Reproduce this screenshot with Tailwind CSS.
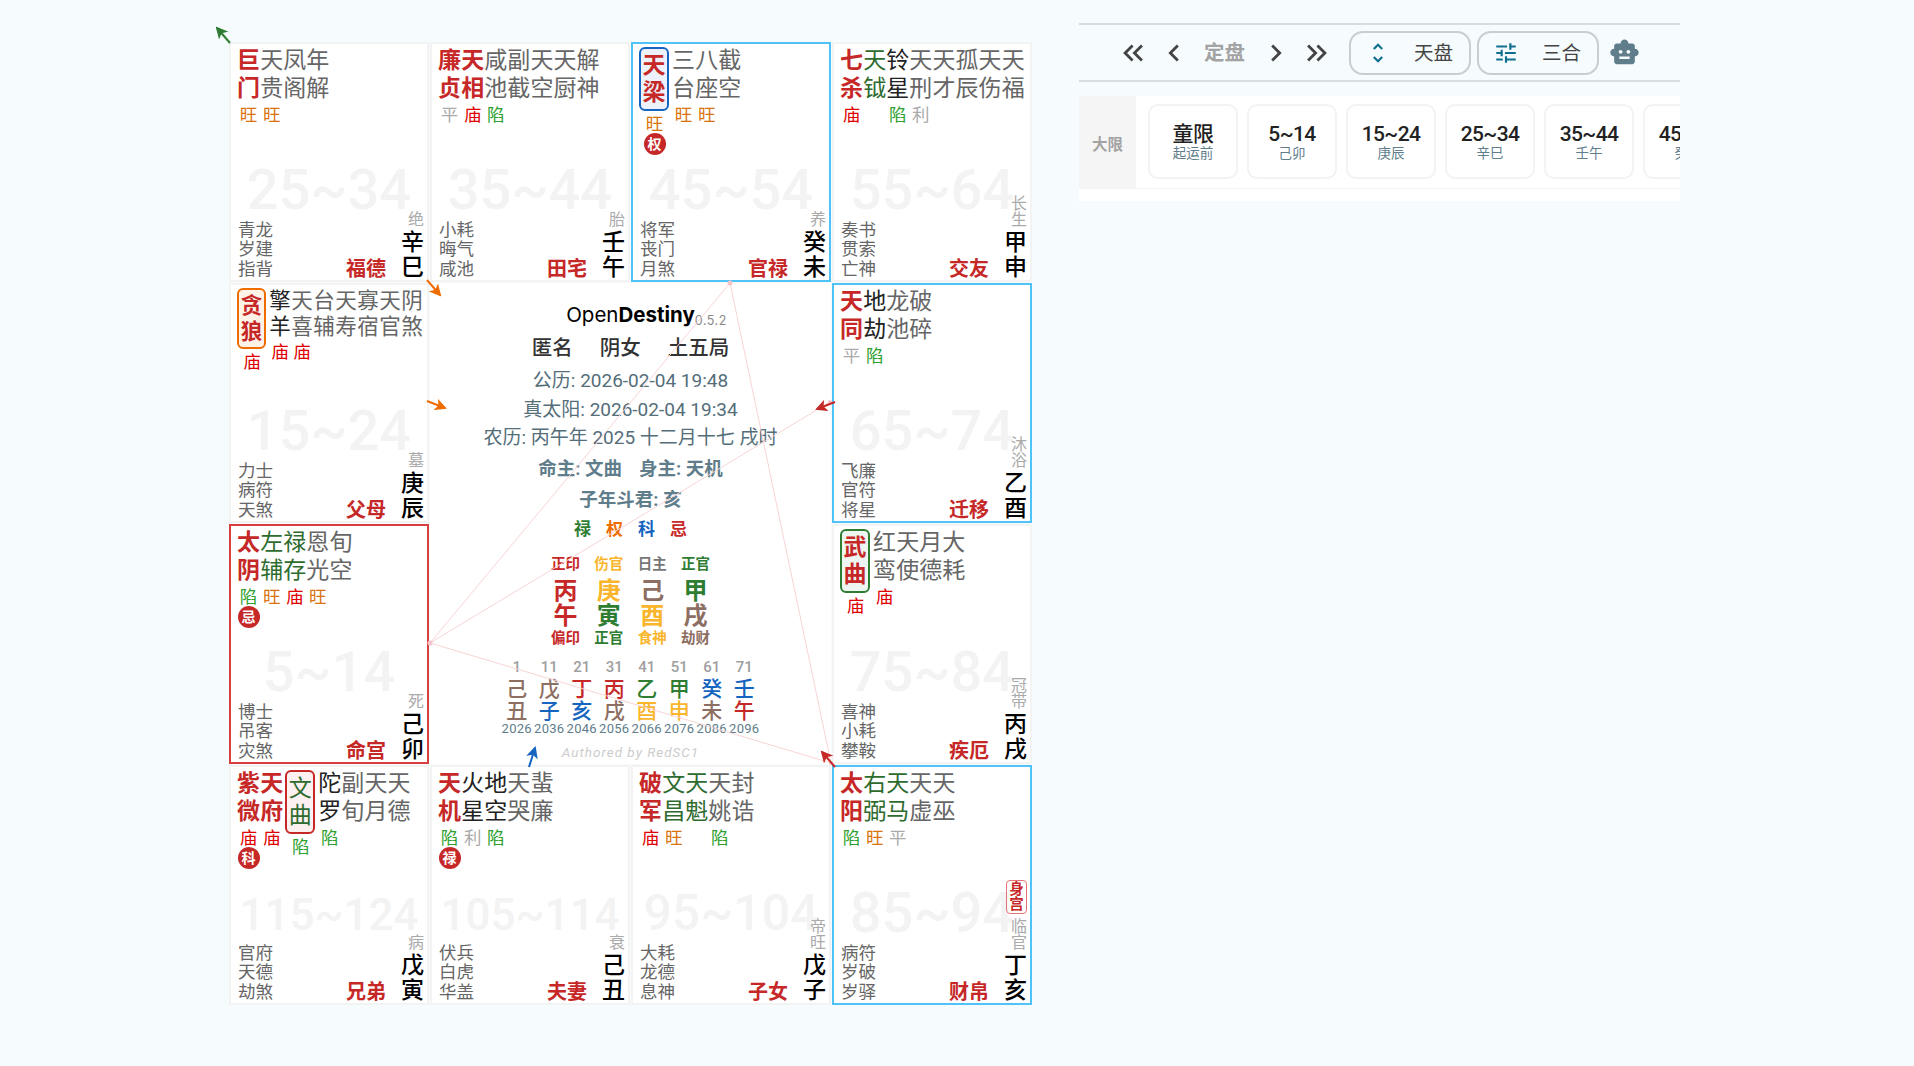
<!DOCTYPE html>
<html lang="zh-CN">
<head>
    <meta charset="UTF-8">
    <title>OpenDestiny</title>
    <script src="https://cdn.jsdelivr.net/npm/@tailwindcss/browser@4"></script>
</head>
<body class="h-screen overflow-hidden bg-[#f6fbfe] font-[Roboto,'Noto_Sans_CJK_SC',sans-serif]">
    <div class="flex items-start">
        <!-- 命盘 -->
        <div id="board" class="relative mt-[42px] ml-[229px] grid grid-cols-[repeat(4,200px)] grid-rows-[repeat(4,240px)] gap-px">
            <!-- 中宫 -->
            <div class="col-start-2 col-span-2 row-start-2 row-span-2 flex flex-col items-center bg-white pt-[17px]">
                <div class="h-[30px] flex items-baseline font-[Inter,sans-serif] text-[20.5px] leading-[30px] text-black">
                    <span>Open</span><span class="font-bold">Destiny</span><span class="w-0 translate-y-[3px] text-[12.5px] tracking-[0.5px] text-[#888]">0.5.2</span>
                </div>
                <div class="mt-px flex gap-[27px] text-[20.5px] leading-[34px] font-medium text-[#333]">
                    <span>匿名</span><span>阴女</span><span>土五局</span>
                </div>
                <div class="mt-[2px] text-[19px] leading-[28.5px] text-[#546e7a] text-center">
                    <p>公历: 2026-02-04 19:48</p>
                    <p>真太阳: 2026-02-04 19:34</p>
                    <p>农历: 丙午年 2025 十二月十七 戌时</p>
                </div>
                <p class="flex gap-[17px] text-[18.5px] leading-[32px] font-bold text-[#607d8b]"><span>命主: 文曲</span><span>身主: 天机</span></p>
                <p class="text-[18.5px] leading-[30px] font-bold text-[#607d8b]">子年斗君: 亥</p>
                <div class="flex gap-[15px] text-[17px] leading-[28px] font-bold">
                    <span class="text-[#2e7d32]">禄</span><span class="text-[#ef6c00]">权</span><span class="text-[#1565c0]">科</span><span class="text-[#c62828]">忌</span>
                </div>
                <!-- 八字 -->
                <div id="bazi" class="mt-[8px] grid grid-cols-[repeat(4,43.3px)] text-center"></div>
                <!-- 小运 -->
                <div id="xiaoyun" class="mt-[9px] grid grid-cols-[repeat(8,32.5px)] text-center"></div>
                <p class="mt-[6px] text-[13.5px] leading-[20px] italic tracking-[1px] text-[#ccc]">Authored by RedSC1</p>
            </div>

            <!-- 飞化连线 -->
            <svg class="absolute left-0 top-0 z-10 overflow-visible pointer-events-none" width="803" height="963" fill="none">
                <defs>
                    <marker id="ag" markerWidth="6" markerHeight="6" refX="5" refY="3" orient="auto"><path d="M0 0L6 3L0 6L1.5 3Z" fill="#2e7d32"/></marker>
                    <marker id="ao" markerWidth="6" markerHeight="6" refX="5" refY="3" orient="auto"><path d="M0 0L6 3L0 6L1.5 3Z" fill="#ef6c00"/></marker>
                    <marker id="ar" markerWidth="6" markerHeight="6" refX="5" refY="3" orient="auto"><path d="M0 0L6 3L0 6L1.5 3Z" fill="#c62828"/></marker>
                    <marker id="ab" markerWidth="6" markerHeight="6" refX="5" refY="3" orient="auto"><path d="M0 0L6 3L0 6L1.5 3Z" fill="#1565c0"/></marker>
                </defs>
                <g stroke="#f8d5d5" stroke-width="1">
                    <path d="M201 601L501 241L602 721Z"/>
                    <path d="M201 601L601 360"/>
                </g>
                <g fill="#f5c4c8">
                    <circle cx="201" cy="601" r="2.5"/><circle cx="501" cy="241" r="2.5"/><circle cx="601" cy="360" r="2"/><circle cx="602" cy="721" r="2"/>
                </g>
                <g stroke-width="2">
                    <path d="M1 1L-12 -14" stroke="#2e7d32" marker-end="url(#ag)"/>
                    <path d="M198 238L211 253" stroke="#ef6c00" marker-end="url(#ao)"/>
                    <path d="M198 359L216 366" stroke="#ef6c00" marker-end="url(#ao)"/>
                    <path d="M606 360L588 367" stroke="#c62828" marker-end="url(#ar)"/>
                    <path d="M606 725L593 710" stroke="#c62828" marker-end="url(#ar)"/>
                    <path d="M300 725L306 706" stroke="#1565c0" marker-end="url(#ab)"/>
                </g>
            </svg>
        </div>

        <!-- 右侧面板 -->
        <div class="mt-[23px] ml-[47px] w-[601px] overflow-hidden">
            <div class="h-[59px] flex items-center pl-[37px] border-y-2 border-[#d7dcdf]">
                <svg class="w-[34px] h-[34px] fill-[#444]" viewBox="0 0 24 24"><path d="M17.59 18L19 16.59 14.42 12 19 7.41 17.59 6l-6 6zM11 18l1.41-1.41L7.83 12l4.58-4.59L11 6l-6 6z"/></svg>
                <svg class="ml-[7px] w-[34px] h-[34px] fill-[#444]" viewBox="0 0 24 24"><path d="M15.41 7.41L14 6l-6 6 6 6 1.41-1.41L10.83 12z"/></svg>
                <span class="ml-[13px] text-[20.5px] font-bold text-[#a3a3a3] translate-y-px">定盘</span>
                <svg class="ml-[14px] w-[34px] h-[34px] fill-[#444]" viewBox="0 0 24 24"><path d="M10 6L8.59 7.41 13.17 12l-4.58 4.59L10 18l6-6z"/></svg>
                <svg class="ml-[7px] w-[34px] h-[34px] fill-[#444]" viewBox="0 0 24 24"><path d="M6.41 6L5 7.41 9.58 12 5 16.59 6.41 18l6-6zM13 6l-1.41 1.41L16.17 12l-4.58 4.59L13 18l6-6z"/></svg>
                <div class="ml-[15px] w-[122px] h-[44px] flex items-center pl-[14px] gap-[23px] border-2 border-[#c8ced1] rounded-[14px]">
                    <svg class="w-[26px] h-[26px] fill-[#0e6f8e]" viewBox="0 0 24 24"><path d="M12 5.83L15.17 9l1.41-1.41L12 3 7.41 7.59 8.83 9 12 5.83zm0 12.34L8.83 15l-1.41 1.41L12 21l4.59-4.59L15.17 15 12 18.17z"/></svg>
                    <span class="text-[19.5px] text-[#444] translate-y-px">天盘</span>
                </div>
                <div class="ml-[6px] w-[122px] h-[44px] flex items-center pl-[14px] gap-[23px] border-2 border-[#c8ced1] rounded-[14px]">
                    <svg class="w-[26px] h-[26px] fill-[#0e6f8e]" viewBox="0 0 24 24"><path d="M3 17v2h6v-2H3zM3 5v2h10V5H3zm10 16v-2h8v-2h-8v-2h-2v6h2zM7 9v2H3v2h4v2h2V9H7zm14 4v-2H11v2h10zm-6-4h2V7h4V5h-4V3h-2v6z"/></svg>
                    <span class="text-[19.5px] text-[#444] translate-y-px">三合</span>
                </div>
                <svg class="ml-[10px] w-[31px] h-[31px] fill-[#607d8b]" viewBox="0 0 24 24"><path d="M20 9V7c0-1.1-.9-2-2-2h-3c0-1.66-1.34-3-3-3S9 3.34 9 5H6c-1.1 0-2 .9-2 2v2c-1.66 0-3 1.34-3 3s1.34 3 3 3v4c0 1.1.9 2 2 2h12c1.1 0 2-.9 2-2v-4c1.66 0 3-1.34 3-3s-1.34-3-3-3zM7.5 11.5c0-.83.67-1.5 1.5-1.5s1.5.67 1.5 1.5S9.83 13 9 13s-1.5-.67-1.5-1.5zM16 17H8v-2h8v2zm-1-4c-.83 0-1.5-.67-1.5-1.5S14.17 10 15 10s1.5.67 1.5 1.5S15.83 13 15 13z"/></svg>
            </div>
            <div class="mt-[14px] h-[105px] bg-white">
                <div class="h-[93px] flex border-b border-[#f3f3f3]">
                    <div class="w-[57px] shrink-0 flex items-center justify-center pt-[7px] bg-[#f5f5f5] text-[15.5px] font-bold text-[#a3a3a3]">大限</div>
                    <div id="decades" class="flex gap-[9px] pl-[12px] pt-[8px]"></div>
                </div>
            </div>
        </div>
    </div>

    <script>
        // 星曜颜色
        const starColor = {
            main: 'font-bold text-[#c62828]',
            green: 'text-[#2e6b2e]',
            black: 'text-[#222]',
            misc: 'text-[#666]'
        };
        // 亮度颜色
        const brightColor = {
            '庙': 'text-[#e00000]',
            '旺': 'text-[#d9730d]',
            '陷': 'text-[#2ea02e]',
            '平': 'text-[#aaa]',
            '利': 'text-[#aaa]'
        };
        // 命主星外框
        const boxColor = {
            blue: 'border-[#1565c0] bg-[#edf2fa]',
            orange: 'border-[#ef6c00] bg-[#fff3e8]',
            green: 'border-[#2e7d32] bg-[#eff5f0]',
            red: 'border-[#c62828] bg-[#fdf0f0]'
        };
        const cellBorder = {
            none: 'border-[#f3f3f3]',
            blue: 'border-[#4fc3f7]',
            red: 'border-[#d84040]'
        };
        // 大限字号按字数缩小
        const decSize = {
            4: 'text-[56px] leading-[56px]',
            5: 'text-[56px] leading-[56px]',
            6: 'text-[50px] leading-[56px]',
            7: 'text-[44px] leading-[60px]'
        };

        const s = (t, k, b, h, box) => ({ t, k, b, h, box });

        const palaces = [
            { pos: 'col-start-1 row-start-1', dec: '25~34', gods: ['青龙', '岁建', '指背'], name: '福德', gz: '辛巳', ls: '绝', border: 'none',
              stars: [s('巨门', 'main', '旺'), s('天贵', 'misc', '旺'), s('凤阁', 'misc'), s('年解', 'misc')] },
            { pos: 'col-start-2 row-start-1', dec: '35~44', gods: ['小耗', '晦气', '咸池'], name: '田宅', gz: '壬午', ls: '胎', border: 'none',
              stars: [s('廉贞', 'main', '平'), s('天相', 'main', '庙'), s('咸池', 'misc', '陷'), s('副截', 'misc'), s('天空', 'misc'), s('天厨', 'misc'), s('解神', 'misc')] },
            { pos: 'col-start-3 row-start-1', dec: '45~54', gods: ['将军', '丧门', '月煞'], name: '官禄', gz: '癸未', ls: '养', border: 'blue',
              stars: [s('天梁', 'main', '旺', '权', 'blue'), s('三台', 'misc', '旺'), s('八座', 'misc', '旺'), s('截空', 'misc')] },
            { pos: 'col-start-4 row-start-1', dec: '55~64', gods: ['奏书', '贯索', '亡神'], name: '交友', gz: '甲申', ls: '长生', border: 'none',
              stars: [s('七杀', 'main', '庙'), s('天钺', 'green'), s('铃星', 'black', '陷'), s('天刑', 'misc', '利'), s('天才', 'misc'), s('孤辰', 'misc'), s('天伤', 'misc'), s('天福', 'misc')] },
            { pos: 'col-start-1 row-start-2', dec: '15~24', gods: ['力士', '病符', '天煞'], name: '父母', gz: '庚辰', ls: '墓', border: 'none', small: true,
              stars: [s('贪狼', 'main', '庙', null, 'orange'), s('擎羊', 'black', '庙'), s('天喜', 'misc', '庙'), s('台辅', 'misc'), s('天寿', 'misc'), s('寡宿', 'misc'), s('天官', 'misc'), s('阴煞', 'misc')] },
            { pos: 'col-start-4 row-start-2', dec: '65~74', gods: ['飞廉', '官符', '将星'], name: '迁移', gz: '乙酉', ls: '沐浴', border: 'blue',
              stars: [s('天同', 'main', '平'), s('地劫', 'black', '陷'), s('龙池', 'misc'), s('破碎', 'misc')] },
            { pos: 'col-start-1 row-start-3', dec: '5~14', gods: ['博士', '吊客', '灾煞'], name: '命宫', gz: '己卯', ls: '死', border: 'red',
              stars: [s('太阴', 'main', '陷', '忌'), s('左辅', 'green', '旺'), s('禄存', 'green', '庙'), s('恩光', 'misc', '旺'), s('旬空', 'misc')] },
            { pos: 'col-start-4 row-start-3', dec: '75~84', gods: ['喜神', '小耗', '攀鞍'], name: '疾厄', gz: '丙戌', ls: '冠带', border: 'none',
              stars: [s('武曲', 'main', '庙', null, 'green'), s('红鸾', 'misc', '庙'), s('天使', 'misc'), s('月德', 'misc'), s('大耗', 'misc')] },
            { pos: 'col-start-1 row-start-4', dec: '115~124', gods: ['官府', '天德', '劫煞'], name: '兄弟', gz: '戊寅', ls: '病', border: 'none',
              stars: [s('紫微', 'main', '庙', '科'), s('天府', 'main', '庙'), s('文曲', 'green', '陷', null, 'red'), s('陀罗', 'black', '陷'), s('副旬', 'misc'), s('天月', 'misc'), s('天德', 'misc')] },
            { pos: 'col-start-2 row-start-4', dec: '105~114', gods: ['伏兵', '白虎', '华盖'], name: '夫妻', gz: '己丑', ls: '衰', border: 'none',
              stars: [s('天机', 'main', '陷', '禄'), s('火星', 'black', '利'), s('地空', 'black', '陷'), s('天哭', 'misc'), s('蜚廉', 'misc')] },
            { pos: 'col-start-3 row-start-4', dec: '95~104', gods: ['大耗', '龙德', '息神'], name: '子女', gz: '戊子', ls: '帝旺', border: 'none',
              stars: [s('破军', 'main', '庙'), s('文昌', 'green', '旺'), s('天魁', 'green'), s('天姚', 'misc', '陷'), s('封诰', 'misc')] },
            { pos: 'col-start-4 row-start-4', dec: '85~94', gods: ['病符', '岁破', '岁驿'], name: '财帛', gz: '丁亥', ls: '临官', border: 'blue', body: true,
              stars: [s('太阳', 'main', '陷'), s('右弼', 'green', '旺'), s('天马', 'green', '平'), s('天虚', 'misc'), s('天巫', 'misc')] }
        ];

        function starColumn(star, small) {
            const colW = small ? 'w-[22px] text-[21.5px] leading-[25.5px]' : 'w-[23.1px] text-[23px] leading-[27.5px]';
            const boxW = small ? 'w-[29px] h-[61px] text-[21.5px] leading-[25.5px]' : 'w-[30px] h-[64px] text-[23px] leading-[27.5px]';
            const chars = [...star.t].map(c => `<span class="block">${c}</span>`).join('');
            const head = star.box
                ? `<div class="${boxW} ml-[2px] mr-[3px] flex flex-col items-center justify-center rounded-md border-2 ${boxColor[star.box]} ${starColor[star.k]}">${chars}</div>`
                : `<div class="${colW} text-center ${starColor[star.k]}">${chars}</div>`;
            const bright = star.b ? `<div class="text-[17.5px] leading-[26px] ${brightColor[star.b]}">${star.b}</div>` : '';
            const hua = star.h ? `<div class="-mt-1 w-[22px] h-[22px] flex items-center justify-center rounded-full bg-[#c62828] text-[14px] font-bold text-white">${star.h}</div>` : '';
            return `<div class="flex flex-col items-center ${star.box ? 'first:-ml-[2px]' : ''}">${head}${bright}${hua}</div>`;
        }

        function palaceCell(p) {
            return `
                <div class="${p.pos} relative flex flex-col justify-between overflow-hidden bg-white border-2 ${cellBorder[p.border]} pl-[6px] pr-[3px] pt-[3px]">
                    <div class="absolute inset-x-0 top-[118px] text-center ${decSize[p.dec.length]} font-medium text-[#f3f3f3]">${p.dec}</div>
                    <div class="relative flex items-start">${p.stars.map(x => starColumn(x, p.small)).join('')}</div>
                    <div class="relative flex items-end pl-[1px]">
                        <div class="flex-1 pb-px text-[17.5px] leading-[19.5px] text-[#666]">${p.gods.map(g => `<p>${g}</p>`).join('')}</div>
                        <div class="mr-[15px] text-[20px] leading-[22px] font-bold text-[#c62828]">${p.name}</div>
                        <div class="flex flex-col items-end">
                            ${p.body ? '<div class="mb-[5px] w-[21px] rounded-sm border border-[#e57373] text-center text-[14.5px] leading-[15px] py-[1px] font-bold text-[#c62828]">身宫</div>' : ''}
                            <div class="w-[16px] text-[16px] leading-[16px] text-[#aaa] text-right mb-[3px]">${p.ls}</div>
                            <div class="w-[23px] text-[23px] leading-[24.5px] font-medium text-black text-center">${p.gz}</div>
                        </div>
                    </div>
                </div>`;
        }

        document.getElementById('board').insertAdjacentHTML('beforeend', palaces.map(palaceCell).join(''));

        // 八字
        const cRed = 'text-[#c62828]', cAmber = 'text-[#f9b52b]', cGreen = 'text-[#2e7d32]', cBrown = 'text-[#8d6e63]', cBlue = 'text-[#1565c0]', cGray = 'text-[#777]';
        const bazi = [
            [['正印', cRed], ['丙', cRed], ['午', cRed], ['偏印', cRed]],
            [['伤官', cAmber], ['庚', cAmber], ['寅', cGreen], ['正官', cGreen]],
            [['日主', cGray], ['己', cBrown], ['酉', cAmber], ['食神', cAmber]],
            [['正官', cGreen], ['甲', cGreen], ['戌', cBrown], ['劫财', cBrown]]
        ];
        document.getElementById('bazi').innerHTML = bazi.map(col => `
            <div>
                <p class="text-[14.5px] leading-[28px] font-bold ${col[0][1]}">${col[0][0]}</p>
                <p class="text-[24px] leading-[25px] font-bold ${col[1][1]}">${col[1][0]}</p>
                <p class="text-[24px] leading-[25px] font-bold ${col[2][1]}">${col[2][0]}</p>
                <p class="text-[14.5px] leading-[19px] font-bold ${col[3][1]}">${col[3][0]}</p>
            </div>`).join('');

        // 小运
        const xiaoyun = [
            ['1', '己', cBrown, '丑', cBrown, '2026'],
            ['11', '戊', cBrown, '子', cBlue, '2036'],
            ['21', '丁', cRed, '亥', cBlue, '2046'],
            ['31', '丙', cRed, '戌', cBrown, '2056'],
            ['41', '乙', cGreen, '酉', cAmber, '2066'],
            ['51', '甲', cGreen, '申', cAmber, '2076'],
            ['61', '癸', cBlue, '未', cBrown, '2086'],
            ['71', '壬', cBlue, '午', cRed, '2096']
        ];
        document.getElementById('xiaoyun').innerHTML = xiaoyun.map(x => `
            <div>
                <p class="text-[15px] leading-[21px] font-medium text-[#9e9e9e]">${x[0]}</p>
                <p class="text-[21px] leading-[22px] font-medium ${x[2]}">${x[1]}</p>
                <p class="text-[21px] leading-[22px] font-medium ${x[4]}">${x[3]}</p>
                <p class="text-[13px] leading-[14px] tracking-[0.3px] text-[#607d8b]">${x[5]}</p>
            </div>`).join('');

        // 大限
        const decades = [['童限', '起运前'], ['5~14', '己卯'], ['15~24', '庚辰'], ['25~34', '辛巳'], ['35~44', '壬午'], ['45~54', '癸未']];
        document.getElementById('decades').innerHTML = decades.map(d => `
            <div class="w-[90px] h-[75px] shrink-0 flex flex-col items-center justify-center rounded-[10px] border-2 border-[#f3f3f3]">
                <span class="text-[21px] leading-[22px] font-medium tracking-[-0.6px] text-[#222]">${d[0]}</span>
                <span class="text-[13.5px] leading-[16px] text-[#607d8b]">${d[1]}</span>
            </div>`).join('');
    </script>
</body>
</html>
